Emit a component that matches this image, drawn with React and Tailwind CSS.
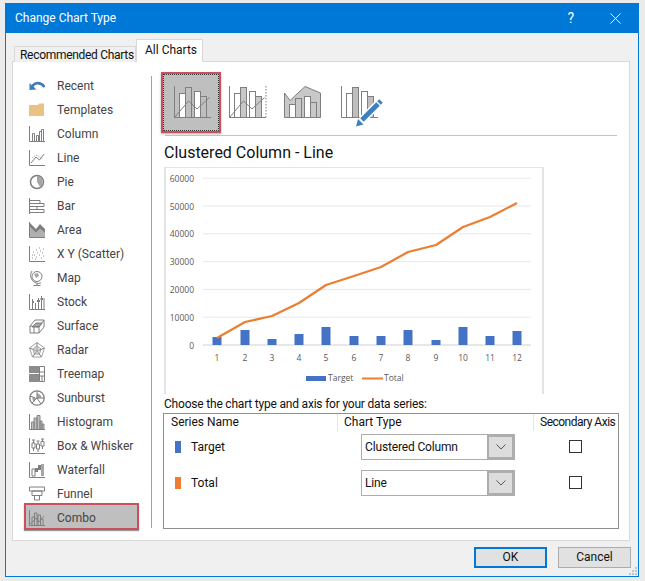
const GRAY = "#7f7f7f";

const sideIcons = {
  recent: (
    <>
      <path d="M3 10 C4 4.5 11 3 15.5 9" fill="none" stroke="#3f7cb8" strokeWidth="2.6" />
      <path d="M0.5 5 L7.5 11.5 L0.5 12 Z" fill="#3f7cb8" />
    </>
  ),
  templates: (
    <path d="M0 3 H9 L10 1.5 H15 V14 H0 Z" fill="#e8c383" />
  ),
  column: (
    <>
      <path d="M0.5 0 V15.5 H16" fill="none" stroke={GRAY} />
      <path d="M3.5 15 V7.5 H5.5 V15 M7.5 15 V9.5 H9.5 V15 M10.5 15 V5.5 H12.5 V15 M12.5 15 V3.5 H14.5 V15" fill="none" stroke={GRAY} />
    </>
  ),
  line: (
    <>
      <path d="M0.5 0 V15.5 H16" fill="none" stroke={GRAY} />
      <path d="M2 13 L7 7 L10.5 10 L15 4" fill="none" stroke={GRAY} />
      <path d="M3 8 L7 5 L11 7 L14 9" fill="none" stroke="#b5b5b5" strokeDasharray="1.5 1" />
    </>
  ),
  pie: (
    <>
      <circle cx="8" cy="8" r="6.5" fill="#fff" stroke={GRAY} strokeWidth="1.5" />
      <path d="M8 2 A6 6 0 0 1 11 13 L8 8 Z" fill="#a6a6a6" />
    </>
  ),
  bar: (
    <>
      <path d="M0.5 0 V16" fill="none" stroke={GRAY} />
      <path d="M1 2.5 H11 V5.5 H1 M1 5.5 H15 V8.5 H1 M1 8.5 H8 V11.5 H1 M1 11.5 H15 V14.5 H1" fill="none" stroke={GRAY} />
    </>
  ),
  area: (
    <>
      <path d="M0.5 0 V15.5 H16" fill="none" stroke={GRAY} />
      <path d="M1 5 L7 11 L11 7 L16 11 V15 H1 Z" fill="#b0b0b0" />
      <path d="M1 1 L7 7 L11 2 L16 7 V11 L11 7 L7 11 L1 5 Z" fill="#7f7f7f" />
    </>
  ),
  scatter: (
    <>
      <path d="M0.5 0 V15.5 H16" fill="none" stroke={GRAY} />
      <path d="M3 12h1M5 9h1M4 6h1M7 11h1M8 7h1M7 4h1M10 9h1M11 5h1M10 2h1M13 7h1M14 3h1M12 12h1M6 13h1M14 10h1M3 9h1" stroke="#8c8c8c" strokeDasharray="1 0" />
    </>
  ),
  map: (
    <>
      <circle cx="8" cy="6.5" r="5" fill="none" stroke={GRAY} />
      <path d="M5 4 L9 3 L10 6 L7 8 Z" fill="#a6a6a6" />
      <path d="M3 1 A8 8 0 0 0 12 13 M8 13 V15.5 M4.5 15.5 H11.5" fill="none" stroke={GRAY} />
    </>
  ),
  stock: (
    <>
      <path d="M0.5 0 V15.5 H16" fill="none" stroke={GRAY} />
      <path d="M3.5 5 V15 M6.5 9 V15 M9.5 4 V15 M12.5 2 V15 M15 4 V15" stroke={GRAY} fill="none" />
      <path d="M3 8 H5 M8 7 H11 M11.5 5 H14" stroke={GRAY} strokeWidth="2" />
    </>
  ),
  surface: (
    <>
      <path d="M1 8 L6 2 H15 V9 L10 15 H1 Z" fill="#fff" stroke={GRAY} />
      <path d="M3 9 L7 5 H13 L10 9 Z" fill="#a6a6a6" stroke={GRAY} />
      <path d="M1 8 L10 9 V15 M10 9 L15 2 M5 9 V15" fill="none" stroke={GRAY} />
    </>
  ),
  radar: (
    <>
      <path d="M8 0.5 L15.5 6 L12.5 15 H3.5 L0.5 6 Z M8 4 L12 7 L10.5 12 H5.5 L4 7 Z" fill="none" stroke="#a0a0a0" />
      <path d="M8 0.5 V9 M0.5 6 L8 9 L15.5 6 M3.5 15 L8 9 L12.5 15" fill="none" stroke={GRAY} />
      <path d="M8 3 L11 8 L10 13 L5 11 L3 7 Z" fill="#bdbdbd" fillOpacity="0.6" />
    </>
  ),
  treemap: (
    <>
      <rect x="0" y="0" width="16" height="16" fill="#fff" />
      <rect x="0" y="0" width="10" height="7" fill="#8c8c8c" />
      <rect x="0" y="8" width="10" height="8" fill="#8c8c8c" />
      <path d="M10.5 0.5 H15.5 V15.5 H10.5 Z M10.5 6 H15.5 M13 10 V15.5 M10.5 10 H15.5" fill="none" stroke={GRAY} />
    </>
  ),
  sunburst: (
    <>
      <circle cx="8" cy="8" r="7.2" fill="#fff" stroke={GRAY} strokeWidth="1.3" />
      <path d="M8 3.5 A4.5 4.5 0 0 1 12.5 8 L8 8 Z M8 8 L5 12 A5 5 0 0 1 3.5 7 Z" fill="#a6a6a6" />
      <path d="M8 1 V8 L15 8 M8 8 L3 13 M8 8 L12 14 M1 6 L6 8" fill="none" stroke={GRAY} />
    </>
  ),
  histogram: (
    <>
      <path d="M0.5 0 V15.5 H16" fill="none" stroke={GRAY} />
      <path d="M2.5 15 V8 H5 V15 M5 15 V4 H8 V15 M8 15 V1.5 H11 V15 M11 15 V7 H13 V15 M13 15 V10 H15 V15" fill="#c0c0c0" stroke={GRAY} strokeWidth="0.9" />
    </>
  ),
  box: (
    <>
      <path d="M0.5 0 V15.5 H16" fill="none" stroke={GRAY} />
      <path d="M4.5 2 V13 M9 3 V14 M13.5 1 V11 M3 2 H6 M7.5 3 H10.5 M12 1 H15" stroke={GRAY} fill="none" />
      <path d="M3 5 H6 V10 H3 Z M7.5 6 H10.5 V11 H7.5 Z M12 3.5 H15 V8 H12 Z" fill="#fff" stroke={GRAY} />
    </>
  ),
  waterfall: (
    <>
      <path d="M0.5 0 V15.5 H16" fill="none" stroke={GRAY} />
      <path d="M3 14 V7 H6 V14 Z" fill="#fff" stroke={GRAY} />
      <path d="M6 6 H9 V10 H6 Z" fill={GRAY} />
      <path d="M9 3 H12 V8 H9 Z" fill={GRAY} />
      <path d="M12 2 H15 V14 H12 Z" fill="#a6a6a6" />
    </>
  ),
  funnel: (
    <>
      <path d="M0.5 1 H15.5 V5 H0.5 Z M3 5 H13 V9.5 H3 Z M5.5 9.5 H10.5 V14 H5.5 Z" fill="#fff" stroke={GRAY} />
    </>
  ),
  combo: (
    <>
      <path d="M0.5 0 V15.5 H16" fill="none" stroke={GRAY} />
      <path d="M3 15 V7 H5.5 V15 M5.5 15 V3 H8 V15 M9 15 V5 H11.5 V15 M11.5 15 V9 H14 V15" fill="none" stroke={GRAY} />
      <path d="M1.5 14 L7 8 L10 12 L15 6" fill="none" stroke={GRAY} />
    </>
  ),
};

const chartTypes = [
  ["recent", "Recent"],
  ["templates", "Templates"],
  ["column", "Column"],
  ["line", "Line"],
  ["pie", "Pie"],
  ["bar", "Bar"],
  ["area", "Area"],
  ["scatter", "X Y (Scatter)"],
  ["map", "Map"],
  ["stock", "Stock"],
  ["surface", "Surface"],
  ["radar", "Radar"],
  ["treemap", "Treemap"],
  ["sunburst", "Sunburst"],
  ["histogram", "Histogram"],
  ["box", "Box & Whisker"],
  ["waterfall", "Waterfall"],
  ["funnel", "Funnel"],
];

function SideIcon({ name }) {
  return (
    <svg width="16" height="16" viewBox="0 0 16 16" className="shrink-0">
      {sideIcons[name]}
    </svg>
  );
}

function Bars({ x = 0, a, b }) {
  return (
    <g transform={`translate(${x} 0)`} stroke={GRAY} strokeWidth="1">
      <path d="M1.5 2 V33.5 H38" fill="none" />
      <rect x="6.5" y="9.5" width="6" height="24" fill={a} />
      <rect x="12.5" y="3.5" width="6" height="30" fill={b} />
      <rect x="21.5" y="7.5" width="6" height="26" fill={a} />
      <rect x="27.5" y="12.5" width="6" height="21" fill={b} />
    </g>
  );
}

function ColumnLineIcon() {
  return (
    <svg width="40" height="36" viewBox="0 0 40 36" className="shrink-0">
      <Bars a="#fff" b="#bfbfbf" />
      <path d="M1.5 33.5 L15.5 17 L24 25 L36.5 13.5" fill="none" stroke={GRAY} />
    </svg>
  );
}

function ColumnLineSecondaryIcon() {
  return (
    <svg width="40" height="36" viewBox="0 0 40 36" className="ml-[7px] shrink-0">
      <Bars a="#fff" b="#c8c8c8" />
      <path d="M1.5 33.5 L15.5 17 L24 25 L36.5 13.5" fill="none" stroke={GRAY} />
      <path d="M38 2 V33" stroke={GRAY} strokeDasharray="1.5 1.5" />
    </svg>
  );
}

function AreaColumnIcon() {
  return (
    <svg width="40" height="36" viewBox="0 0 40 36" className="ml-[14px] shrink-0">
      <path d="M2.5 9 L8 16.5 L23 2.5 L38.5 9 V33.5 H2.5 Z" fill="#c8c8c8" stroke={GRAY} />
      <g stroke={GRAY}>
        <rect x="7.5" y="20.5" width="6" height="13" fill="#fff" />
        <rect x="13.5" y="14.5" width="6" height="19" fill="#c8c8c8" />
        <rect x="22.5" y="12.5" width="6" height="21" fill="#fff" />
        <rect x="28.5" y="18.5" width="6" height="15" fill="#c8c8c8" />
      </g>
    </svg>
  );
}

function CustomComboIcon() {
  return (
    <svg width="45" height="46" viewBox="0 0 45 46" className="ml-[18px] shrink-0">
      <Bars a="#fff" b="#bfbfbf" />
      <path d="M22 36 L38 20" stroke="#fff" strokeWidth="8" />
      <path d="M22 36 L38 20" stroke="#3f7fbf" strokeWidth="5" />
      <path d="M39 19 L41 17" stroke="#3f7fbf" strokeWidth="5" />
      <path d="M16 42.5 L18 35 L23.5 40.5 Z" fill="#3f7fbf" />
    </svg>
  );
}

const yTicks = [0, 10000, 20000, 30000, 40000, 50000, 60000];
const xs = [217, 245, 272, 299, 326, 354, 381, 408, 436, 463, 490, 517];
const tops = [337, 330, 339, 334, 327, 336, 336, 330, 340, 327, 336, 331];
const totals = [338, 322, 316, 303, 285, 276, 267, 252, 245, 227, 217, 203];

function Chart() {
  return (
    <svg width="380" height="227" viewBox="164 167 380 227" className="block" fontFamily="'Open Sans', sans-serif" fontSize="8.5" fill="#595959">
      {yTicks.map((t, i) => {
        const y = 345 - i * 27.8;
        return (
          <g key={t}>
            <line x1="203" x2="531" y1={y} y2={y} stroke={i === 0 ? "#d0d0d0" : "#e8e8e8"} />
            <text x="194" y={y + 3.5} textAnchor="end">{t}</text>
          </g>
        );
      })}
      {xs.map((x, i) => (
        <g key={x}>
          <rect x={x - 4.5} y={tops[i]} width="9" height={345 - tops[i]} fill="#4472c4" />
          <text x={x} y="361" textAnchor="middle">{i + 1}</text>
        </g>
      ))}
      <polyline points={xs.map((x, i) => `${x},${totals[i]}`).join(" ")} fill="none" stroke="#ed7d31" strokeWidth="2.2" strokeLinejoin="round" />
      <rect x="306" y="376" width="20" height="5" fill="#4472c4" />
      <text x="328" y="381">Target</text>
      <line x1="362" x2="383" y1="378.5" y2="378.5" stroke="#ed7d31" strokeWidth="2" />
      <text x="384" y="381">Total</text>
    </svg>
  );
}

function Dropdown({ value }) {
  return (
    <div className="ml-[23px] flex h-[26px] w-[154px] border border-[#adadad] bg-white">
      <span className="flex-1 pl-[3px] leading-[24px] tracking-[-0.15px]">{value}</span>
      <span className="flex w-[27px] items-center justify-center border-2 border-[#adadad] bg-[#dddddd]">
        <svg width="10" height="6" viewBox="0 0 10 6">
          <path d="M0.5 0.5 L5 5 L9.5 0.5" fill="none" stroke="#555" />
        </svg>
      </span>
    </div>
  );
}

function SeriesRow({ color, name, type }) {
  return (
    <div className="flex h-[26px] items-center">
      <div className="flex w-[174px] shrink-0 items-center pl-[11px]">
        <span className={`h-3 w-1.5 ${color}`} />
        <span className="ml-[10px]">{name}</span>
      </div>
      <div className="w-[196px] shrink-0">
        <Dropdown value={type} />
      </div>
      <div className="flex w-[83px] shrink-0 justify-center">
        <span className="-mt-px h-[13px] w-[13px] border border-[#333] bg-white" />
      </div>
    </div>
  );
}

export default function App() {
  return (
    <div className="h-[581px] w-[645px] overflow-hidden whitespace-nowrap bg-[#ebebeb] pb-[4px] pl-[5px] pr-[6px] pt-[3px] text-[12px] text-[#111] [font-family:'Roboto',sans-serif]">
      <div className="relative flex h-full flex-col border border-t-0 border-[#0078d7] bg-[#f0f0f0]">
        {/* Title bar */}
        <div className="flex h-[30px] shrink-0 items-center bg-[#0078d7] pl-[9px] text-white">
          <span className="flex-1">Change Chart Type</span>
          <span className="mr-[36px] text-[14px]">?</span>
          <svg width="11" height="11" viewBox="0 0 11 11" className="mr-[17px]">
            <path d="M0.5 0.5 L10.5 10.5 M10.5 0.5 L0.5 10.5" stroke="#fff" />
          </svg>
        </div>

        {/* Tabs */}
        <div className="relative z-10 -mb-px ml-[8px] flex h-[29px] shrink-0 items-end">
          <div className="flex h-[16px] w-[122px] items-center border border-b-0 border-[#d9d9d9] bg-[#f0f0f0] pl-[5px] tracking-[-0.3px]">
            Recommended Charts
          </div>
          <div className="flex h-[23px] w-[67px] items-center border border-b-0 border-[#d9d9d9] bg-white pb-[2px] pl-[8px]">
            All Charts
          </div>
        </div>

        {/* Main panel */}
        <div className="ml-[6px] mr-[8px] flex h-[480px] shrink-0 border border-[#d9d9d9] bg-white">
          <div className="w-[138px] shrink-0 pt-[12px] text-[#444]">
            {chartTypes.map(([icon, label]) => (
              <div key={icon} className="flex h-6 items-center pl-[16px]">
                <SideIcon name={icon} />
                <span className="ml-[12px]">{label}</span>
              </div>
            ))}
            <div className="-mt-[3px] ml-[11px] flex h-[27px] w-[115px] items-center border-2 border-[#c8505f] bg-[#bfbfbf] pl-[3px] pt-[2px] shadow-[0_1px_1px_#999]">
              <SideIcon name="combo" />
              <span className="ml-[12px]">Combo</span>
            </div>
          </div>
          <div className="mt-[14px] h-[452px] w-px shrink-0 bg-[#a0a0a0]" />
          <div className="flex-1 pl-[11px] pt-[10px]">
            <div className="-ml-[2px] flex h-[61px] items-start">
              <div className="h-[61px] w-[60px] shrink-0 border-2 border-[#c8505f] shadow-[0_1px_2px_#aaa]">
                <div className="h-full border border-dotted border-[#333] bg-[#bfbfbf] pl-[9px] pt-[9px]">
                  <ColumnLineIcon />
                </div>
              </div>
              <div className="flex pt-[12px]">
                <ColumnLineSecondaryIcon />
                <AreaColumnIcon />
                <CustomComboIcon />
              </div>
            </div>
            <div className="ml-[2px] mt-[2px] h-px w-[452px] bg-[#c4c4c4]" />
            <div className="ml-px mt-[6px] h-[22px] text-[16px] leading-[22px]">Clustered Column - Line</div>
            <div className="ml-px mt-[3px] h-[227px] w-[380px] border-x-2 border-t border-[#e4e4e4] [&>svg]:-ml-[2px] [&>svg]:-mt-px">
              <Chart />
            </div>
            <div className="ml-px mt-[2px] h-[17px] leading-[17px] tracking-[-0.2px]">Choose the chart type and axis for your data series:</div>
            <div className="h-[116px] w-[456px] border border-[#8f8f8f]">
              <div className="flex h-[17px] leading-[17px]">
                <div className="w-[174px] shrink-0 border-r border-[#e5e5e5] pl-[7px]">Series Name</div>
                <div className="w-[196px] shrink-0 border-r border-[#e5e5e5] pl-[6px]">Chart Type</div>
                <div className="w-[84px] shrink-0 pl-[6px] tracking-[-0.5px]">Secondary Axis</div>
              </div>
              <div className="flex flex-col gap-[10px] pt-[3px]">
                <SeriesRow color="bg-[#4472c4]" name="Target" type="Clustered Column" />
                <SeriesRow color="bg-[#ed7d31]" name="Total" type="Line" />
              </div>
            </div>
          </div>
        </div>

        {/* Footer buttons */}
        <div className="flex flex-1 items-start justify-end gap-[11px] pr-[7px] pt-[6px]">
          <button className="h-[21px] w-[73px] border-2 border-[#0078d7] bg-[#e1e1e1] leading-[17px]">OK</button>
          <button className="h-[21px] w-[73px] border border-[#adadad] bg-[#e1e1e1] leading-[19px]">Cancel</button>
        </div>
        <svg width="8" height="8" viewBox="0 0 8 8" className="absolute bottom-[1px] right-[1px]">
          <path d="M6 0h2v2H6zM3 3h2v2H3zM6 3h2v2H6zM0 6h2v2H0zM3 6h2v2H3zM6 6h2v2H6z" fill="#c4c4c4" />
        </svg>
      </div>
    </div>
  );
}
